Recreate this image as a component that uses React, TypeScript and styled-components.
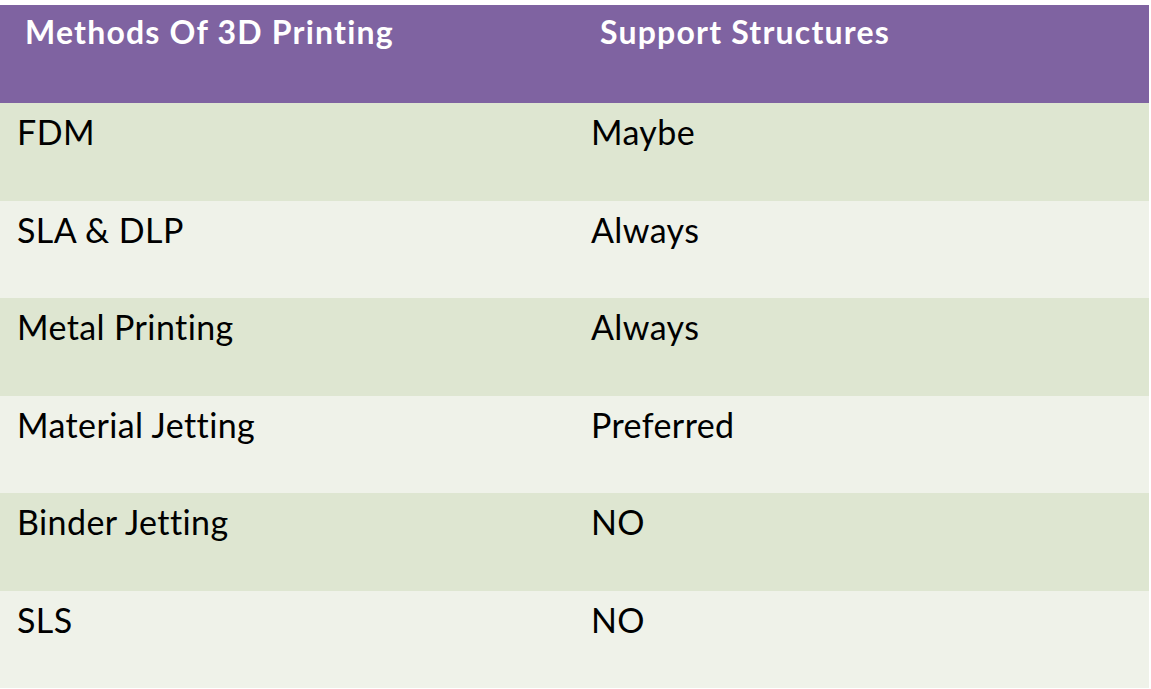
import React from 'react';
import styled, {createGlobalStyle} from 'styled-components';

const rows = [
    {method: 'FDM', support: 'Maybe'},
    {method: 'SLA & DLP', support: 'Always'},
    {method: 'Metal Printing', support: 'Always'},
    {method: 'Material Jetting', support: 'Preferred'},
    {method: 'Binder Jetting', support: 'NO'},
    {method: 'SLS', support: 'NO'},
]

export default function App() {
    return (
        <>
            <GlobalStyle/>
            <Table>
                <HeaderRow>
                    <HeaderCell>Methods Of 3D Printing</HeaderCell>
                    <HeaderCell>Support Structures</HeaderCell>
                </HeaderRow>
                {rows.map((r, i) => (
                    <BodyRow key={r.method} $shaded={i % 2 === 0}>
                        <Cell>{r.method}</Cell>
                        <Cell>{r.support}</Cell>
                    </BodyRow>
                ))}
            </Table>
        </>
    )
}

// Styles
const GlobalStyle = createGlobalStyle`
  html, body {
    margin: 0;
    padding: 0;
    background: #ffffff;
  }

  body {
    font-family: Lato, "Open Sans", "Liberation Sans", sans-serif;
    font-variant-ligatures: none;
    font-feature-settings: "liga" 0, "clig" 0;
    color: #000000;
  }
`

const Table = styled.div`
  margin-top: 5px;
  width: 1149px;
  display: flex;
  flex-direction: column;
`

const HeaderRow = styled.div`
  display: grid;
  grid-template-columns: 575px 1fr;
  height: 98px;
  background: #7f63a1;
`

const HeaderCell = styled.div`
  padding: 8px 0 0 25px;
  font-size: 32px;
  font-weight: 700;
  letter-spacing: 1.2px;
  line-height: 1.2;
  color: #ffffff;
`

const BodyRow = styled.div<{ $shaded: boolean }>`
  display: grid;
  grid-template-columns: 574px 1fr;
  height: 97.5px;
  background: ${p => p.$shaded ? '#dee6d1' : '#eff2e9'};
`

const Cell = styled.div`
  padding: 9px 0 0 17px;
  font-size: 34px;
  letter-spacing: 0.4px;
  line-height: 1.2;
`
